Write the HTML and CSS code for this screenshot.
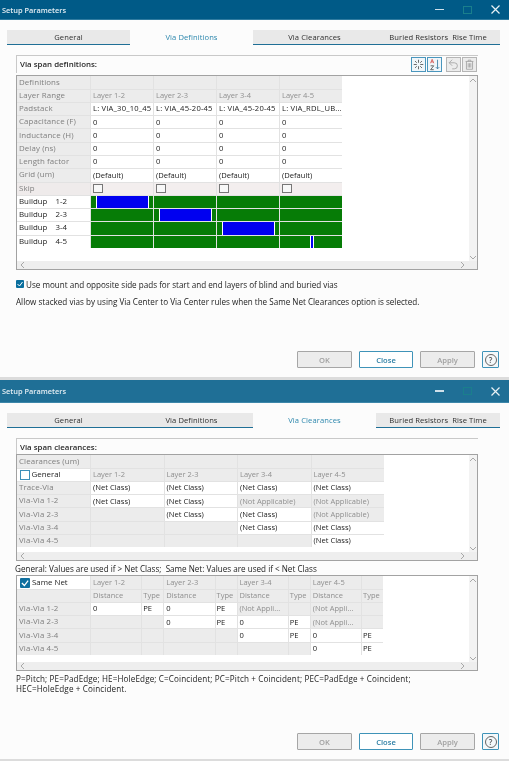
FILE: index.html
```html
<!DOCTYPE html>
<html lang="en">
<head>
<meta charset="utf-8">
<title>Setup Parameters</title>
<link rel="stylesheet" href="styles.css">
</head>
<body>
<section class="dialog first">
  <header class="title dark">
    <span class="title-text">Setup Parameters</span>
    <span class="win-btns">
      <span class="win-min"></span>
      <span class="win-max"></span>
      <svg class="win-x" viewBox="0 0 9 9"><path d="M.5.5l8 8M8.5.5l-8 8"/></svg>
    </span>
  </header>
  <nav class="tabs">
    <div class="tab">General</div>
    <div class="tab active">Via Definitions</div>
    <div class="tab">Via Clearances</div>
    <div class="tab">Buried Resistors&nbsp; Rise Time</div>
  </nav>
  <div class="content">
    <div class="toolbar">
      <span class="cap">Via span definitions:</span>
      <span class="tools">
        <svg class="tool on" viewBox="0 0 15 15"><path d="M7.5 2v3.500M7.500 9.500V13M2 7.500h3.500M9.500 7.500H13M3.500 3.500l2 2M11.500 3.500l-2 2M3.500 11.500l2-2M11.500 11.500l-2-2" stroke="#555"/></svg>
        <svg class="tool on" viewBox="0 0 15 15"><path d="M3 6l1.800-4.500L6.600 6M3.700 4.500h2.200" stroke="#d9534f"/><path d="M3 9h3.600L3 13.500h3.600" stroke="#555"/><path d="M11 2v10.500M9 10.500l2 2 2-2" stroke="#3a7ea6"/></svg>
        <svg class="tool off gapl" viewBox="0 0 15 15"><path d="M6 2L2.500 5.500 6 9M2.500 5.500h6a3.500 3.500 0 0 1 0 7H6" stroke="#a5a5a5"/></svg>
        <svg class="tool off" viewBox="0 0 15 15"><path d="M3 4h9M6 4V2.500h3V4M4 4v9h7V4M6 6v5M7.500 6v5M9 6v5" stroke="#a5a5a5"/></svg>
      </span>
    </div>
    <div class="box box-a">
      <div class="grid grid-a">
        <div class="l">Definitions</div><div class="h"></div><div class="h"></div><div class="h"></div><div class="h"></div>
        <div class="l">Layer Range</div><div class="h">Layer 1-2</div><div class="h">Layer 2-3</div><div class="h">Layer 3-4</div><div class="h">Layer 4-5</div>
        <div class="l">Padstack</div><div class="v pad">L: VIA_30_10_45</div><div class="v pad">L: VIA_45-20-45</div><div class="v pad">L: VIA_45-20-45</div><div class="v pad">L: VIA_RDL_UB...</div>
        <div class="l">Capacitance (F)</div><div class="v">0</div><div class="v">0</div><div class="v">0</div><div class="v">0</div>
        <div class="l">Inductance (H)</div><div class="v">0</div><div class="v">0</div><div class="v">0</div><div class="v">0</div>
        <div class="l">Delay (ns)</div><div class="v">0</div><div class="v">0</div><div class="v">0</div><div class="v">0</div>
        <div class="l">Length factor</div><div class="v">0</div><div class="v">0</div><div class="v">0</div><div class="v">0</div>
        <div class="l">Grid (um)</div><div class="v">(Default)</div><div class="v">(Default)</div><div class="v">(Default)</div><div class="v">(Default)</div>
        <div class="l pink">Skip</div><div class="s"><i class="cb"></i></div><div class="s"><i class="cb"></i></div><div class="s"><i class="cb"></i></div><div class="s"><i class="cb"></i></div>
        <div class="b"><span>Buildup</span><span>1-2</span></div><div class="g"><i class="blue wide"></i></div><div class="g"></div><div class="g"></div><div class="g"></div>
        <div class="b"><span>Buildup</span><span>2-3</span></div><div class="g"></div><div class="g"><i class="blue wide"></i></div><div class="g"></div><div class="g"></div>
        <div class="b"><span>Buildup</span><span>3-4</span></div><div class="g"></div><div class="g"></div><div class="g"><i class="blue wide"></i></div><div class="g"></div>
        <div class="b"><span>Buildup</span><span>4-5</span></div><div class="g"></div><div class="g"></div><div class="g"></div><div class="g"><i class="blue thin"></i></div>
      </div>
      <div class="vbar"><svg viewBox="0 0 8 5"><path d="M1 4l3-3 3 3"/></svg><svg viewBox="0 0 8 5"><path d="M1 1l3 3 3-3"/></svg></div>
      <div class="hbar"><svg viewBox="0 0 5 8"><path d="M4 1L1 4l3 3"/></svg><svg viewBox="0 0 5 8"><path d="M1 1l3 3-3 3"/></svg></div>
    </div>
    <label class="check-line"><svg class="tick" viewBox="0 0 8 8"><path d="M1.500 4l2 2 3-4"/></svg>Use mount and opposite side pads for start and end layers of blind and buried vias</label>
    <p class="note allow">Allow stacked vias by using Via Center to Via Center rules when the Same Net Clearances option is selected.</p>
  </div>
  <footer class="buttons">
    <button class="btn">OK</button>
    <button class="btn primary">Close</button>
    <button class="btn">Apply</button>
    <button class="help"><span>?</span></button>
  </footer>
</section>
<section class="dialog second">
  <header class="title light">
    <span class="title-text">Setup Parameters</span>
    <span class="win-btns">
      <span class="win-min"></span>
      <span class="win-max"></span>
      <svg class="win-x" viewBox="0 0 9 9"><path d="M.5.5l8 8M8.5.5l-8 8"/></svg>
    </span>
  </header>
  <nav class="tabs">
    <div class="tab">General</div>
    <div class="tab">Via Definitions</div>
    <div class="tab active">Via Clearances</div>
    <div class="tab">Buried Resistors&nbsp; Rise Time</div>
  </nav>
  <div class="content">
    <div class="toolbar short"><span class="cap">Via span clearances:</span></div>
    <div class="box box-b">
      <div class="grid grid-b">
        <div class="l">Clearances (um)</div><div class="h"></div><div class="h"></div><div class="h"></div><div class="h"></div>
        <div class="b chk"><i class="cb blueb"></i>General</div><div class="h">Layer 1-2</div><div class="h">Layer 2-3</div><div class="h">Layer 3-4</div><div class="h">Layer 4-5</div>
        <div class="l">Trace-Via</div><div class="v">(Net Class)</div><div class="v">(Net Class)</div><div class="v">(Net Class)</div><div class="v">(Net Class)</div>
        <div class="l">Via-Via 1-2</div><div class="v">(Net Class)</div><div class="v">(Net Class)</div><div class="h">(Not Applicable)</div><div class="h">(Not Applicable)</div>
        <div class="l">Via-Via 2-3</div><div class="h"></div><div class="v">(Net Class)</div><div class="v">(Net Class)</div><div class="h">(Not Applicable)</div>
        <div class="l">Via-Via 3-4</div><div class="h"></div><div class="h"></div><div class="v">(Net Class)</div><div class="v">(Net Class)</div>
        <div class="l">Via-Via 4-5</div><div class="h"></div><div class="h"></div><div class="h"></div><div class="v">(Net Class)</div>
      </div>
      <div class="vbar"><svg viewBox="0 0 8 5"><path d="M1 4l3-3 3 3"/></svg><svg viewBox="0 0 8 5"><path d="M1 1l3 3 3-3"/></svg></div>
      <div class="hbar"><svg viewBox="0 0 5 8"><path d="M4 1L1 4l3 3"/></svg><svg viewBox="0 0 5 8"><path d="M1 1l3 3-3 3"/></svg></div>
    </div>
    <p class="note rule">General: Values are used if &gt; Net Class;&nbsp; Same Net: Values are used if &lt; Net Class</p>
    <div class="box box-c">
      <div class="grid grid-c">
        <div class="b chk"><svg class="tick big" viewBox="0 0 8 8"><path d="M1.500 4l2 2 3-4"/></svg>Same Net</div><div class="h">Layer 1-2</div><div class="h"></div><div class="h">Layer 2-3</div><div class="h"></div><div class="h">Layer 3-4</div><div class="h"></div><div class="h">Layer 4-5</div><div class="h"></div>
        <div class="l"></div><div class="h">Distance</div><div class="h t">Type</div><div class="h">Distance</div><div class="h t">Type</div><div class="h">Distance</div><div class="h t">Type</div><div class="h">Distance</div><div class="h t">Type</div>
        <div class="l">Via-Via 1-2</div><div class="v">0</div><div class="v t">PE</div><div class="v">0</div><div class="v t">PE</div><div class="h">(Not Appli...</div><div class="h"></div><div class="h">(Not Appli...</div><div class="h"></div>
        <div class="l">Via-Via 2-3</div><div class="h"></div><div class="h"></div><div class="v">0</div><div class="v t">PE</div><div class="v">0</div><div class="v t">PE</div><div class="h">(Not Appli...</div><div class="h"></div>
        <div class="l">Via-Via 3-4</div><div class="h"></div><div class="h"></div><div class="h"></div><div class="h"></div><div class="v">0</div><div class="v t">PE</div><div class="v">0</div><div class="v t">PE</div>
        <div class="l">Via-Via 4-5</div><div class="h"></div><div class="h"></div><div class="h"></div><div class="h"></div><div class="h"></div><div class="h"></div><div class="v">0</div><div class="v t">PE</div>
      </div>
      <div class="vbar"><svg viewBox="0 0 8 5"><path d="M1 4l3-3 3 3"/></svg><svg viewBox="0 0 8 5"><path d="M1 1l3 3 3-3"/></svg></div>
      <div class="hbar"><svg viewBox="0 0 5 8"><path d="M4 1L1 4l3 3"/></svg><svg viewBox="0 0 5 8"><path d="M1 1l3 3-3 3"/></svg></div>
    </div>
    <p class="note legend">P=Pitch; PE=PadEdge; HE=HoleEdge; C=Coincident; PC=Pitch + Coincident; PEC=PadEdge + Coincident;<br>HEC=HoleEdge + Coincident.</p>
  </div>
  <footer class="buttons">
    <button class="btn ok">OK</button>
    <button class="btn primary">Close</button>
    <button class="btn">Apply</button>
    <button class="help"><span>?</span></button>
  </footer>
</section>
</body>
</html>
```
FILE: styles.css
```css
* { box-sizing: border-box; }
html, body { margin: 0; padding: 0; }
body {
  width: 509px;
  height: 761px;
  overflow: hidden;
  background: #dcdcdc;
  font-family: "Open Sans", "Noto Sans", sans-serif;
  font-size: 8.1px;
  color: #222;
  filter: blur(0.35px);
}
.dialog { display: flex; flex-direction: column; background: #fcfcfc; }
.first { height: 377px; margin-bottom: 3px; }
.second { height: 379px; }

.title {
  display: flex;
  align-items: center;
  justify-content: space-between;
  color: #e4eef3;
  font-size: 7.4px;
  font-weight: 600;
  padding: 0 9px 0 2px;
}
.title.dark { height: 20px; background: #005a87; border-bottom: 1px solid #2f7ba0; }
.title.light { height: 23px; background: #1f6f96; border-bottom: 1px solid #3d87aa; }
.win-btns { display: flex; align-items: center; }
.win-min { width: 9px; height: 1.500px; background: #cfe0ea; }
.win-max { width: 9px; height: 8px; margin-left: 19px; border: 1px solid #1a7f8c; }
.win-x { width: 9px; height: 9px; margin-left: 19px; fill: none; stroke: #e8f1f5; stroke-width: 1.200; }

.tabs {
  display: grid;
  grid-template-columns: 123px 123px 123px 124px;
  margin: 10px 9px 0 7px;
}
.tab {
  height: 15px;
  line-height: 14px;
  text-align: center;
  background: #e9e9e9;
  border-bottom: 1px solid #1f6f96;
  color: #2e2e2e;
  font-weight: 500;
  font-size: 7.6px;
  letter-spacing: .08px;
}
.tab.active { background: transparent; border-bottom-color: transparent; color: #2c87ad; }

.content { padding: 0 31px 0 16px; display: flex; flex-direction: column; }
.toolbar {
  display: flex;
  justify-content: space-between;
  height: 18px;
  margin-top: 10px;
  padding: 1px 1px 0 3px;
  border-top: 1px solid #c9c9c9;
  border-left: 1px solid #c9c9c9;
}
.toolbar.short { height: 16px; }
.cap { font-weight: 600; font-size: 7.9px; line-height: 15px; color: #2a2a2a; }
.tools { display: flex; gap: 1px; }
.tool { width: 15px; height: 15px; fill: none; stroke-width: 1; }
.tool.on { border: 1.500px solid #4a96bd; background: #f0f6fa; }
.tool.off { border: 1.500px solid #b5b5b5; background: #ececec; }
.tool.gapl { margin-left: 3px; }

.box {
  display: grid;
  grid-template-columns: 1fr 8px;
  grid-template-rows: 1fr 8px;
  border: 1px solid #a2a2a2;
  background: #fff;
}
.box-a { height: 195px; margin-top: 2px; }
.box-b { height: 107px; }
.box-c { height: 96px; }
.grid {
  display: grid;
  gap: 1px;
  align-self: start;
  justify-self: start;
  grid-auto-rows: 12.27px;
  padding-top: .4px;
  background: #e2e2e2;
}
.grid-a { grid-template-columns: 73px repeat(4, 62px); }
.grid-b { grid-template-columns: 73px repeat(4, 72.5px); }
.grid-c { grid-template-columns: 73px repeat(4, 50.25px 21px); }
.grid > div {
  display: flex;
  align-items: center;
  padding-left: 2px;
  white-space: nowrap;
  overflow: hidden;
  line-height: 1;
}
.grid .l { background: #ececec; color: #808080; font-size: 7.9px; letter-spacing: .1px; }
.grid .h { background: #ececec; color: #8f8f8f; font-size: 7.5px; padding-left: 2px; }
.grid .v { background: #fff; color: #222; font-weight: 500; font-size: 7.6px; }
.grid .pad { letter-spacing: .2px; }
.grid .t { padding-left: 1px; }
.grid .pink { background: #efebeb; }
.grid .s { background: #f3eeee; padding-left: 2px; }
.grid .b { background: #fff; color: #1e1e1e; font-weight: 500; font-size: 7.9px; gap: 8px; }
.grid .chk { gap: 2px; padding-left: 3px; }
.grid .g { background: #067c06; padding: 0; }
.cb { display: block; width: 9.500px; height: 9.500px; border: 1px solid #777; background: #f8f8f8; flex: none; }
.cb.blueb { border: 1px solid #3d8fb8; background: #fff; }
.blue { display: block; height: 100%; background: #0000f0; border: solid #fff; border-width: 0 1px; }
.blue.wide { width: 53px; margin-left: 5px; }
.blue.thin { width: 4px; margin-left: 29.500px; }

.vbar {
  grid-column: 2;
  grid-row: 1;
  background: #f3f3f3;
  display: flex;
  flex-direction: column;
  justify-content: space-between;
  padding: 2px 0 1px;
}
.vbar svg { width: 8px; height: 5px; fill: none; stroke: #a8a8a8; stroke-width: 1; }
.hbar {
  grid-column: 1 / 3;
  grid-row: 2;
  background: #eeeeee;
  display: flex;
  justify-content: space-between;
  padding: 0 12px 0 3px;
}
.hbar svg { width: 5px; height: 8px; fill: none; stroke: #a8a8a8; stroke-width: 1; }

.check-line { display: flex; align-items: center; gap: 2px; height: 10px; margin-top: 9px; color: #222; }
.tick { width: 8px; height: 8px; background: #0a6f9e; border-radius: 1px; fill: none; stroke: #fff; stroke-width: 1; flex: none; }
.tick.big { width: 10px; height: 10px; background: #0f6f9f; }
.note { margin: 0; color: #222; }
.allow { margin-top: 8px; line-height: 10px; }
.rule { margin: 3px 0 1px -1px; line-height: 10px; height: 10px; }
.legend { margin-top: 3px; line-height: 10px; letter-spacing: .13px; }

.buttons { margin-top: auto; display: flex; gap: 7px; justify-content: flex-end; padding: 0 10px 9px 0; }
.btn {
  width: 55px;
  height: 17px;
  padding: 0;
  border: 1px solid #a6a6a6;
  border-radius: 1px;
  background: #ececec;
  color: #a0a0a0;
  font: inherit;
  font-size: 7.6px;
  font-weight: 600;
}
.btn.primary { width: 54px; border-color: #3f93b8; background: #fff; color: #2c7fa5; }
.help {
  width: 17px;
  height: 17px;
  padding: 0;
  border: 1px solid #3f93b8;
  border-radius: 1px;
  background: #f4f8fa;
  display: flex;
  align-items: center;
  justify-content: center;
}
.help span {
  width: 12px;
  height: 12px;
  border: 1px solid #666;
  border-radius: 50%;
  color: #555;
  font: 600 8px/10px "Open Sans", sans-serif;
  text-align: center;
}
```
